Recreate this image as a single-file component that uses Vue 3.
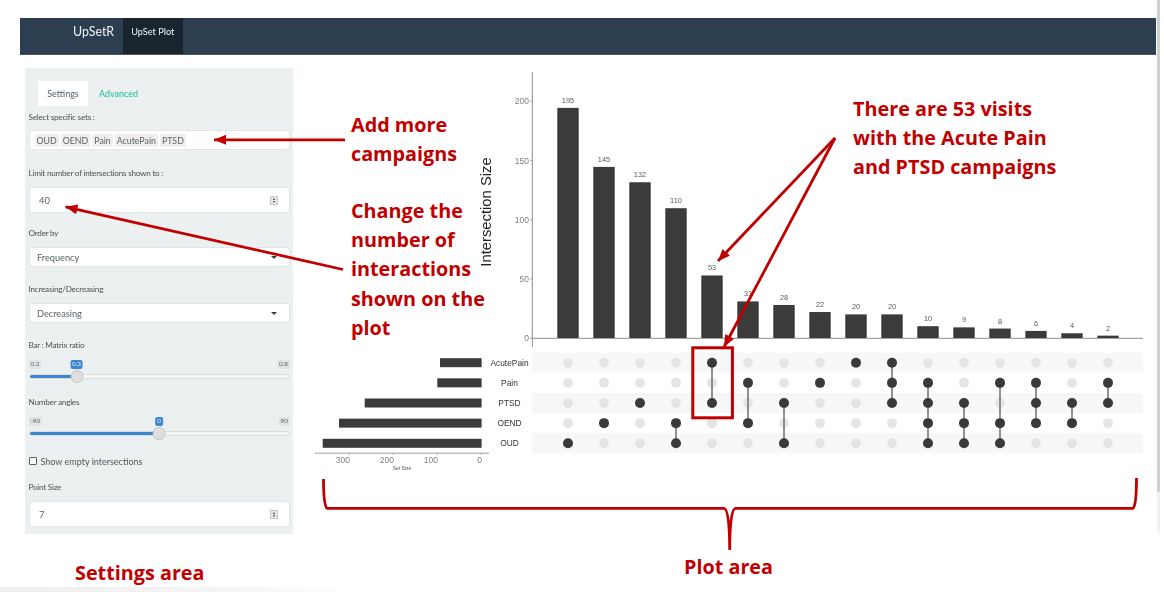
<script setup>
const values = [195,145,132,110,53,31,28,22,20,20,10,9,8,6,4,2]
const membership = [[4],[3],[2],[3,4],[0,2],[1,3],[2,4],[1],[0],[0,1,2],[1,2,3,4],[2,3,4],[1,3,4],[1,2,3],[2,3],[1,2]]
const rowY = i => 362.7 + 20.15 * i
const colX = i => 568 + 36 * i
const baseY = 338
const scale = 1.18
const bars = values.map((v, i) => ({ v, x: colX(i), h: v * scale, top: baseY - v * scale }))
const rows = [0,1,2,3,4].map(rowY)
const stripes = [0,2,4].map(rowY)
const columns = membership.map((m, i) => ({
  x: colX(i), m,
  y1: m.length ? rowY(Math.min(...m)) : 0,
  y2: m.length ? rowY(Math.max(...m)) : 0
}))
const sets = [
  { n: 'AcutePain', left: 440 },
  { n: 'Pain', left: 437.3 },
  { n: 'PTSD', left: 364.7 },
  { n: 'OEND', left: 339 },
  { n: 'OUD', left: 322.7 }
]
const yTicks = [[200,101],[150,160.5],[100,219.7],[50,279],[0,338]]
const xTicks = [[300,349],[200,393],[100,437],[0,481]]
const chips = ['OUD','OEND','Pain','AcutePain','PTSD']
</script>

<template>
  <div class="page">
    <header class="nav">
      <span class="brand">UpSetR</span>
      <span class="nav-tab">UpSet Plot</span>
    </header>

    <main class="main">
      <aside class="side">
        <div class="tabs">
          <span class="tab active">Settings</span>
          <span class="tab link">Advanced</span>
        </div>
        <label class="lab first">Select specific sets :</label>
        <div class="box chips">
          <span v-for="c in chips" :key="c" class="chip">{{ c }}</span>
        </div>
        <label class="lab g17">Limit number of intersections shown to :</label>
        <div class="box num">
          <span>40</span>
          <span class="spin"><i class="up"></i><i class="down"></i></span>
        </div>
        <label class="lab g14">Order by</label>
        <div class="box sel"><span>Frequency</span><i class="caret"></i></div>
        <label class="lab g16">Increasing/Decreasing</label>
        <div class="box sel"><span>Decreasing</span><i class="caret"></i></div>
        <label class="lab g16">Bar : Matrix ratio</label>
        <div class="slider s-ratio">
          <span class="mm mn">0.2</span><span class="cur">0.3</span><span class="mm mx">0.8</span>
          <div class="track"><div class="fill"></div></div>
          <div class="knob"></div>
        </div>
        <label class="lab g13">Number angles</label>
        <div class="slider s-angle">
          <span class="mm mn">-90</span><span class="cur">0</span><span class="mm mx">90</span>
          <div class="track"><div class="fill"></div></div>
          <div class="knob"></div>
        </div>
        <label class="check"><i class="cb"></i>Show empty intersections</label>
        <label class="lab g14">Point Size</label>
        <div class="box num">
          <span>7</span>
          <span class="spin"><i class="up"></i><i class="down"></i></span>
        </div>
      </aside>

      <svg class="chart" width="864" height="524" viewBox="300 68 864 524">
        <g font-family="'Liberation Sans', Arial, sans-serif">
          <line x1="532.3" y1="72" x2="532.3" y2="347" stroke="#8c8c8c" stroke-width="1" />
          <line x1="532" y1="338.3" x2="1143" y2="338.3" stroke="#8c8c8c" stroke-width="1" />
          <g v-for="t in yTicks" :key="t[0]">
            <line x1="530" :y1="t[1]" x2="532" :y2="t[1]" stroke="#8c8c8c" stroke-width="0.7" />
            <text x="529" :y="t[1] + 3" text-anchor="end" font-size="8.5" fill="#7f7f7f">{{ t[0] }}</text>
          </g>
          <text transform="translate(491 212) rotate(-90)" text-anchor="middle" font-size="14.8" fill="#222">Intersection Size</text>

          <g v-for="b in bars" :key="b.x">
            <rect :x="b.x - 10.7" :y="b.top" width="21.4" :height="b.h" fill="#3b3b3b" />
            <text :x="b.x" :y="b.top - 5" text-anchor="middle" font-size="7.4" fill="#5a5a5a">{{ b.v }}</text>
          </g>

          <rect v-for="y in stripes" :key="y" x="532" :y="y - 10" width="611" height="20" fill="#f7f7f7" />
          <g v-for="c in columns" :key="c.x">
            <circle v-for="(y, i) in rows" :key="i" :cx="c.x" :cy="y" r="5" fill="#e5e5e5" />
            <line :x1="c.x" :y1="c.y1" :x2="c.x" :y2="c.y2" stroke="#6e6e6e" stroke-width="1.5" />
            <circle v-for="i in c.m" :key="'d' + i" :cx="c.x" :cy="rowY(i)" r="5" fill="#3a3a3a" />
          </g>

          <g v-for="(s, i) in sets" :key="s.n">
            <rect :x="s.left" :y="rowY(i) - 4.5" :width="481.6 - s.left" height="9" fill="#3b3b3b" />
            <text x="509.5" :y="rowY(i) + 3" text-anchor="middle" font-size="8.4" fill="#333">{{ s.n }}</text>
          </g>
          <line x1="315" y1="453.2" x2="489" y2="453.2" stroke="#8c8c8c" stroke-width="0.8" />
          <g v-for="t in xTicks" :key="t[0]">
            <line :x1="t[1]" y1="453" :x2="t[1]" y2="455" stroke="#8c8c8c" stroke-width="0.7" />
            <text :x="t[1] + 1" y="463" text-anchor="end" font-size="8.5" fill="#7f7f7f">{{ t[0] }}</text>
          </g>
          <text x="402" y="470" text-anchor="middle" font-size="5" fill="#555">Set Size</text>
        </g>
      </svg>
    </main>

    <svg class="overlay" width="1164" height="592" viewBox="0 0 1164 592">
      <defs>
        <marker id="head" markerUnits="userSpaceOnUse" markerWidth="14" markerHeight="12" refX="12" refY="5" orient="auto">
          <path d="M0 0 L12 5 L0 10 Z" fill="#c00000" />
        </marker>
      </defs>
      <g stroke="#c00000" stroke-width="2.8" fill="none">
        <line x1="345" y1="139.8" x2="214" y2="139.8" marker-end="url(#head)" />
        <line x1="343" y1="269.5" x2="65.5" y2="206.8" marker-end="url(#head)" />
        <line x1="835" y1="138" x2="718" y2="261" marker-end="url(#head)" />
        <line x1="835" y1="138" x2="724" y2="347" marker-end="url(#head)" />
        <rect x="692.8" y="347.8" width="39.6" height="70" stroke-width="3" />
        <path d="M323.5 479 Q323.5 505 327 508.3 L724 508.3 Q729.5 508.3 729.7 550 Q729.9 508.3 735.5 508.3 L1133 508.3 Q1136.5 505 1136.5 478" />
      </g>
    </svg>

    <div class="note n1">Add more<br />campaigns</div>
    <div class="note n2">Change the<br />number of<br />interactions<br />shown on the<br />plot</div>
    <div class="note n3">There are 53 visits<br />with the Acute Pain<br />and PTSD campaigns</div>
    <div class="note n4">Settings area</div>
    <div class="note n5">Plot area</div>

    <div class="scroll"><div class="thumb"></div></div>
    <div class="edge"></div>
  </div>
</template>

<style>
html, body { margin: 0; background: #fff; }
</style>

<style scoped>
.page {
  position: relative;
  width: 1164px;
  height: 592px;
  overflow: hidden;
  padding-top: 18px;
  box-sizing: border-box;
  font-family: Lato, "Open Sans", sans-serif;
  background: #fff;
}
.nav {
  display: flex;
  align-items: stretch;
  margin-left: 20px;
  width: 1136px;
  height: 37px;
  background: #2c3e50;
  border-bottom: 1px solid #46596b;
  box-sizing: border-box;
  color: #f2f4f5;
  filter: blur(0.3px);
}
.brand {
  font-size: 12.4px;
  line-height: 27px;
  margin-left: 53px;
  width: 49.5px;
}
.nav-tab {
  width: 60.5px;
  text-align: center;
  font-size: 9.2px;
  line-height: 27px;
  background: #1a242f;
  height: 36px;
}
.main {
  display: flex;
  margin-top: 13px;
  padding-left: 25px;
}
.side {
  width: 267.5px;
  height: 466px;
  flex: none;
  box-sizing: border-box;
  padding: 13px 2.5px 0 3.5px;
  background: #ecf0f1;
  border-radius: 2px 2px 0 0;
  display: flex;
  flex-direction: column;
  color: #4b5358;
  filter: blur(0.3px);
}
.chart {
  flex: none;
  margin-left: 7.5px;
  display: block;
  filter: blur(0.25px);
}
.tabs {
  display: flex;
  margin-left: 9.5px;
  height: 25px;
  font-size: 9px;
  line-height: 25px;
}
.tab.active {
  width: 50px;
  text-align: center;
  background: #fff;
  color: #55606a;
}
.tab.link {
  margin-left: 11px;
  color: #18bc9c;
}
.lab {
  display: block;
  height: 12px;
  line-height: 12px;
  font-size: 8.2px;
  letter-spacing: -0.25px;
  margin-bottom: 8px;
}
.lab.first { margin-top: 5px; margin-bottom: 7px; }
.g17 { margin-top: 17px; }
.g14 { margin-top: 14px; }
.g16 { margin-top: 16px; }
.g13 { margin-top: 13px; }
.box {
  background: #fff;
  border: 1px solid #e1e6e8;
  border-radius: 3px;
  box-sizing: border-box;
  display: flex;
  align-items: center;
  color: #59636b;
  font-size: 9.2px;
}
.chips {
  height: 20px;
  padding-left: 5px;
  gap: 2px;
}
.chip {
  background: #efefef;
  padding: 0 2px;
  height: 13px;
  line-height: 13px;
  border-radius: 1px;
  font-size: 8.8px;
}
.num {
  height: 26px;
  padding-left: 9.5px;
  justify-content: space-between;
  padding-right: 11px;
  border: 1px solid #dfe7ee;
  font-size: 9.5px;
}
.spin {
  width: 8px;
  height: 9px;
  background: #e6e6e6;
  border: 0.5px solid #c8c8c8;
  box-sizing: border-box;
  display: flex;
  flex-direction: column;
  align-items: center;
  justify-content: center;
  gap: 1px;
}
.up, .down {
  width: 0;
  height: 0;
  border-left: 1.5px solid transparent;
  border-right: 1.5px solid transparent;
}
.up { border-bottom: 2px solid #333; }
.down { border-top: 2px solid #333; }
.sel {
  height: 20px;
  padding-left: 7.5px;
  padding-right: 12px;
  justify-content: space-between;
}
.caret {
  width: 0;
  height: 0;
  border-left: 3px solid transparent;
  border-right: 3px solid transparent;
  border-top: 3px solid #3c3c3c;
}
.slider {
  position: relative;
  height: 25px;
  margin-top: -1px;
}
.mm, .cur {
  position: absolute;
  top: 2px;
  height: 8.5px;
  line-height: 8.5px;
  font-size: 6.4px;
  border-radius: 2px;
  text-align: center;
}
.mm { background: #dfe3e4; color: #606a70; }
.mn { left: 0; padding: 0 2px; }
.mx { right: 0; padding: 0 2px; }
.cur { background: #3f87cc; color: #dbe9f6; padding: 0 2px; transform: translateX(-50%); }
.track {
  position: absolute;
  left: 0;
  right: 0;
  top: 15.5px;
  height: 5px;
  border-radius: 2.5px;
  background: #f4f5f5;
  border: 0.5px solid #dcdcdc;
  box-sizing: border-box;
  overflow: hidden;
}
.fill { height: 100%; background: #3f87cc; }
.knob {
  position: absolute;
  top: 11.5px;
  width: 13px;
  height: 13px;
  border-radius: 50%;
  background: #dedede;
  border: 1px solid #c4c4c4;
  box-sizing: border-box;
  transform: translateX(-50%);
}
.s-ratio .cur, .s-ratio .knob { left: 48px; }
.s-ratio .fill { width: 48px; }
.s-angle .cur, .s-angle .knob { left: 130.5px; }
.s-angle .fill { width: 130.5px; }
.check {
  display: flex;
  align-items: center;
  height: 12px;
  margin-top: 15px;
  font-size: 9px;
  color: #4f595f;
}
.cb {
  width: 8px;
  height: 8px;
  border: 1px solid #5f5f5f;
  background: #fff;
  margin-right: 4px;
  box-sizing: border-box;
  border-radius: 1px;
}
.overlay {
  position: absolute;
  left: 0;
  top: 0;
  pointer-events: none;
}
.note {
  position: absolute;
  font-family: "Open Sans", "Noto Sans", sans-serif;
  font-weight: 700;
  font-size: 19.8px;
  line-height: 29.2px;
  color: #c00000;
  white-space: nowrap;
}
.n1 { left: 351px; top: 110px; }
.n2 { left: 351px; top: 196px; }
.n3 { left: 853px; top: 94px; }
.n4 { left: 75px; top: 558px; }
.n5 { left: 684px; top: 552px; }
.scroll {
  position: absolute;
  left: 1157px;
  top: 0;
  width: 3px;
  height: 533px;
  background: #f1f1f1;
}
.thumb { height: 492px; background: #d0d0d0; }
.edge {
  position: absolute;
  left: 0;
  bottom: 0;
  width: 345px;
  height: 5px;
  background: linear-gradient(90deg, #efefef 0%, #f5f5f5 70%, #fff 100%);
}
</style>
